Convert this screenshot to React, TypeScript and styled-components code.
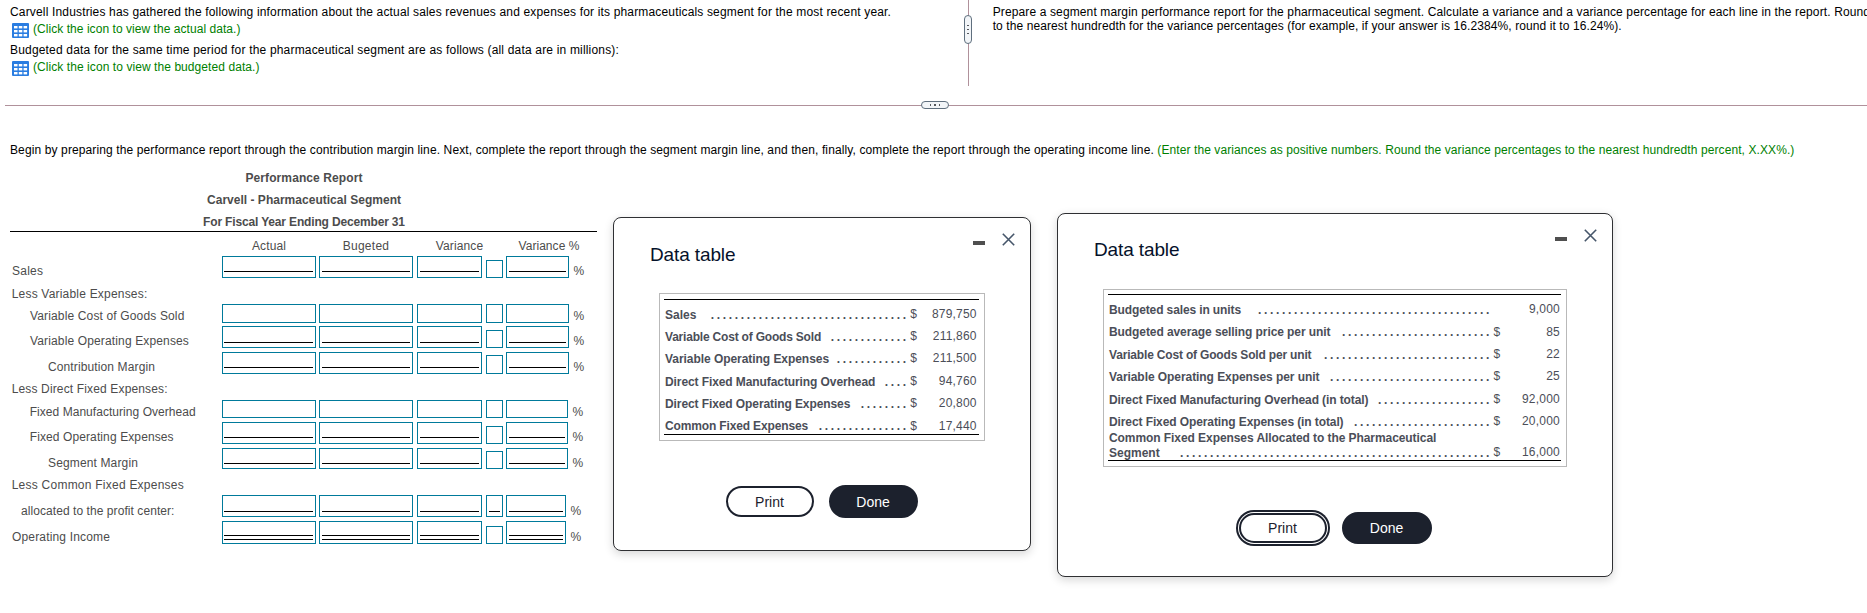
import React from 'react';
import styled, { createGlobalStyle } from 'styled-components';

const GlobalStyle = createGlobalStyle`
  * { box-sizing: border-box; }
  html, body { margin: 0; background: #fff; overflow: hidden; }
  body { font: 12px/14px "Liberation Sans", Arial, sans-serif; color: #000; }
`;

const Page = styled.main`
  width: 1867px;
  height: 613px;
  overflow: hidden;
  display: flex;
  flex-direction: column;
`;

const Text = styled.span<{ $ls?: number }>`
  letter-spacing: ${(p) => p.$ls ?? 0}px;
  white-space: pre;
`;

const GreenText = styled(Text)`
  color: #008000;
`;

/* ---------- top panes ---------- */

const Panes = styled.section`
  display: flex;
  height: 86px;
`;

const LeftPane = styled.div`
  width: 964px;
  padding: 5px 0 0 10px;
  display: flex;
  flex-direction: column;
`;

const RightPane = styled.div`
  flex: 1;
  min-width: 0;
  overflow: hidden;
  padding: 5px 0 0 20.7px;
  display: flex;
  flex-direction: column;
`;

const IconLine = styled.button`
  display: flex;
  align-items: flex-start;
  gap: 4px;
  height: 24px;
  padding: 3px 0 0 2px;
  border: 0;
  background: none;
  font: inherit;
  text-align: left;
  & > svg { margin-top: 1px; flex: none; }
`;

const VerticalSplit = styled.div`
  width: 8px;
  padding-top: 15px;
  background: linear-gradient(#b0919b, #b0919b) 4px 0 / 1px 100% no-repeat;
`;

const HorizontalSplit = styled.div`
  margin: 15px 0 0 5px;
  padding-left: 916px;
  height: 8px;
  background: linear-gradient(#b0919b, #b0919b) 0 4px / 100% 1px no-repeat;
`;

const Grip = styled.div<{ $vertical?: boolean }>`
  width: ${(p) => (p.$vertical ? 8 : 28)}px;
  height: ${(p) => (p.$vertical ? 29 : 8)}px;
  border: 1px solid #5f6f7e;
  border-radius: 4px;
  background: #f2f5f8;
  display: flex;
  flex-direction: ${(p) => (p.$vertical ? 'column' : 'row')};
  align-items: center;
  justify-content: center;
  gap: 3px;
`;

const GripDot = styled.i<{ $vertical?: boolean }>`
  width: ${(p) => (p.$vertical ? 2 : 1.5)}px;
  height: ${(p) => (p.$vertical ? 1 : 2)}px;
  background: #56595e;
`;

const Instruction = styled.p`
  margin: 34px 0 0;
  padding-left: 10px;
  height: 14px;
  white-space: nowrap;
`;

/* ---------- performance report ---------- */

const Workspace = styled.section`
  display: flex;
  align-items: flex-start;
`;

const Report = styled.div`
  width: 587px;
  margin: 14px 16px 0 10px;
  color: #4c4c4c;
`;

const ReportTitles = styled.header`
  display: flex;
  flex-direction: column;
  align-items: center;
  gap: 8px;
  padding: 0 0 2px 1px;
  border-bottom: 1px solid #000;
  font-weight: bold;
`;

const columns = '212px 97px 98px 69px 20px 91px';

const ColumnHeads = styled.div`
  display: grid;
  grid-template-columns: 212px 94px 100px 87px 92px;
  padding-top: 7px;
  height: 24px;
  text-align: center;
`;

const ReportRow = styled.div<{ $top: number; $h: number }>`
  display: grid;
  grid-template-columns: ${columns};
  align-items: end;
  margin-top: ${(p) => p.$top}px;
  height: ${(p) => p.$h}px;
`;

const RowLabel = styled(Text)<{ $indent: number; $drop?: number }>`
  padding-left: ${(p) => p.$indent}px;
  margin-bottom: ${(p) => -(p.$drop ?? 0)}px;
`;

const Field = styled.div<{ $w: number; $h: number; $rule?: number; $base: number; $left?: number }>`
  width: ${(p) => p.$w}px;
  height: ${(p) => p.$h}px;
  border: 1px solid #007a9b;
  display: flex;
  align-items: flex-end;
  padding: 0 2px ${(p) => p.$base}px ${(p) => p.$left ?? 2}px;
  &::after {
    content: '';
    flex: 1;
    border: solid #000;
    height: ${(p) => (p.$rule === 2 ? 3 : p.$rule ?? 0)}px;
    border-width: ${(p) => (p.$rule === 2 ? '1px 0' : p.$rule === 1 ? '1px 0 0' : '0')};
  }
`;

const PercentCell = styled.div<{ $drop?: number }>`
  display: flex;
  align-items: flex-end;
  gap: 4.5px;
  & > span { margin-bottom: ${(p) => -(p.$drop ?? 0)}px; }
`;

type RowData = {
  label: string; ls: number; indent: number; top: number; h: number;
  fields?: boolean; rule?: number; base?: number; small?: number; last?: number; drop?: number; smallRule?: boolean;
};

const reportRows: RowData[] = [
  { label: 'Sales', ls: 0.25, indent: 2, top: 0, h: 22, fields: true, rule: 1, base: 4, small: 18, last: 63 },
  { label: 'Less Variable Expenses:', ls: 0.2, indent: 1.7, top: 9, h: 14 },
  { label: 'Variable Cost of Goods Sold', ls: 0.147, indent: 20, top: 3, h: 19, fields: true, small: 19, last: 63 },
  { label: 'Variable Operating Expenses', ls: 0.141, indent: 20, top: 3, h: 22, fields: true, rule: 1, base: 3, small: 18, last: 63 },
  { label: 'Contribution Margin', ls: 0.12, indent: 38, top: 4, h: 22, fields: true, rule: 1, base: 4, small: 19, last: 63 },
  { label: 'Less Direct Fixed Expenses:', ls: 0.146, indent: 1.7, top: 8, h: 14 },
  { label: 'Fixed Manufacturing Overhead', ls: 0.045, indent: 19.7, top: 4, h: 18, fields: true, small: 18, last: 62, drop: 1 },
  { label: 'Fixed Operating Expenses', ls: 0.108, indent: 19.7, top: 4, h: 22, fields: true, rule: 1, base: 4, small: 18, last: 62 },
  { label: 'Segment Margin', ls: 0.14, indent: 38, top: 4, h: 21, fields: true, rule: 1, base: 3, small: 18, last: 62, drop: 1 },
  { label: 'Less Common Fixed Expenses', ls: 0.24, indent: 1.7, top: 9, h: 14 },
  { label: 'allocated to the profit center:', ls: 0.067, indent: 11, top: 3, h: 22, fields: true, rule: 1, base: 3, small: 22, last: 60, drop: 1, smallRule: true },
  { label: 'Operating Income', ls: 0.163, indent: 2, top: 4, h: 23, fields: true, rule: 2, base: 3, small: 18, last: 60 },
];

/* ---------- data table windows ---------- */

const Window = styled.div<{ $w: number; $h: number; $mt: number; $ml?: number }>`
  flex: none;
  width: ${(p) => p.$w}px;
  height: ${(p) => p.$h}px;
  margin: ${(p) => p.$mt}px 0 0 ${(p) => p.$ml ?? 0}px;
  border: 1px solid #2f3033;
  border-radius: 8px;
  background: #fff;
  box-shadow: 0 3px 10px rgba(0, 0, 0, 0.16);
  color: #4b4e58;
`;

const WindowHead = styled.header<{ $pad: number }>`
  display: flex;
  align-items: flex-start;
  height: 75px;
  padding: 0 15.5px 0 36px;
  & > h2 { padding-top: ${(p) => p.$pad}px; }
`;

const WindowTitle = styled.h2`
  flex: 1;
  margin: 0;
  font-size: 19px;
  line-height: 22px;
  font-weight: normal;
  letter-spacing: -0.12px;
  color: #05112a;
`;

const Minimize = styled.button`
  width: 12px;
  height: 4px;
  margin: 23px 16.5px 0 0;
  padding: 0;
  border: 0;
  background: #4f4f4f;
`;

const Close = styled.button`
  display: block;
  width: 13px;
  height: 13px;
  margin-top: 15px;
  padding: 0;
  border: 0;
  background: none;
  & > svg { display: block; }
`;

const TableFrame = styled.div<{ $w: number; $h: number; $top: number }>`
  width: ${(p) => p.$w}px;
  height: ${(p) => p.$h}px;
  margin-left: 45px;
  padding: ${(p) => p.$top}px 5px 0 4px;
  border: 1px solid #b9b9b9;
`;

const TableBody = styled.div<{ $end: number }>`
  border: solid #000;
  border-width: 1px 0;
  padding: 8px ${(p) => p.$end}px 1px 1px;
`;

const DataRow = styled.div<{ $h: number }>`
  display: flex;
  height: ${(p) => p.$h}px;
`;

const DataLabel = styled(Text)`
  flex: 1;
  font-weight: bold;
`;

const Leader = styled.span`
  margin-right: 1px;
  letter-spacing: 2.666px;
  font-weight: bold;
`;

const Currency = styled.span<{ $lift: number }>`
  width: 25px;
  padding-left: 0.6px;
  margin-top: ${(p) => -p.$lift}px;
`;

const Amount = styled.span<{ $lift: number }>`
  width: 42px;
  display: flex;
  justify-content: flex-end;
  margin-top: ${(p) => -p.$lift}px;
  letter-spacing: 0.2px;
`;

const Actions = styled.footer<{ $mt: number; $ml: number; $gap: number }>`
  display: flex;
  align-items: center;
  gap: ${(p) => p.$gap}px;
  margin: ${(p) => p.$mt}px 0 0 ${(p) => p.$ml}px;
`;

const Pill = styled.button<{ $w: number; $h: number; $solid?: boolean; $focus?: boolean }>`
  width: ${(p) => p.$w}px;
  height: ${(p) => p.$h}px;
  padding: 0 1px 0 0;
  border: 2px solid #1c212d;
  border-radius: 17px;
  background: ${(p) => (p.$solid ? '#1c212d' : '#fff')};
  color: ${(p) => (p.$solid ? '#fff' : '#1c212d')};
  font: 14px/16px "Liberation Sans", Arial, sans-serif;
  box-shadow: ${(p) => (p.$focus ? '0 0 0 1px #fff, 0 0 0 3px #1c212d' : 'none')};
`;

type Entry = { label: string; ls: number; dots: number; cur?: string; value?: string; h: number; lift?: number };

const actual: Entry[] = [
  { label: 'Sales', ls: 0, dots: 33, cur: '$', value: '879,750', h: 22, lift: 1 },
  { label: 'Variable Cost of Goods Sold', ls: -0.198, dots: 13, cur: '$', value: '211,860', h: 22, lift: 1 },
  { label: 'Variable Operating Expenses', ls: -0.052, dots: 12, cur: '$', value: '211,500', h: 23, lift: 1 },
  { label: 'Direct Fixed Manufacturing Overhead', ls: -0.09, dots: 4, cur: '$', value: '94,760', h: 22, lift: 1 },
  { label: 'Direct Fixed Operating Expenses', ls: -0.09, dots: 8, cur: '$', value: '20,800', h: 22, lift: 1 },
  { label: 'Common Fixed Expenses', ls: -0.145, dots: 15, cur: '$', value: '17,440', h: 14 },
];

const budgeted: Entry[] = [
  { label: 'Budgeted sales in units', ls: -0.12, dots: 39, value: '9,000', h: 22, lift: 1 },
  { label: 'Budgeted average selling price per unit', ls: -0.085, dots: 25, cur: '$', value: '85', h: 23 },
  { label: 'Variable Cost of Goods Sold per unit', ls: -0.175, dots: 28, cur: '$', value: '22', h: 22, lift: 1 },
  { label: 'Variable Operating Expenses per unit', ls: -0.065, dots: 27, cur: '$', value: '25', h: 23, lift: 1 },
  { label: 'Direct Fixed Manufacturing Overhead (in total)', ls: -0.1, dots: 19, cur: '$', value: '92,000', h: 22, lift: 1 },
  { label: 'Direct Fixed Operating Expenses (in total)', ls: -0.1, dots: 23, cur: '$', value: '20,000', h: 16, lift: 1 },
  { label: 'Common Fixed Expenses Allocated to the Pharmaceutical', ls: -0.07, dots: 0, h: 15 },
  { label: 'Segment', ls: 0, dots: 52, cur: '$', value: '16,000', h: 13, lift: 1 },
];

function TableIcon() {
  return (
    <svg width="17" height="15" viewBox="0 0 17 15">
      <rect width="17" height="15" rx="1" fill="#2a7de1" />
      <g fill="#fff">
        {[3, 7, 11].map((y) => [2, 6.8, 11.6].map((x) => <rect key={`${x}-${y}`} x={x} y={y} width={3.5} height={2.4} />))}
      </g>
    </svg>
  );
}

function SplitGrip({ vertical }: { vertical?: boolean }) {
  return (
    <Grip $vertical={vertical}>
      <GripDot $vertical={vertical} />
      <GripDot $vertical={vertical} />
      <GripDot $vertical={vertical} />
    </Grip>
  );
}

function ReportLine({ row }: { row: RowData }) {
  const { h, rule, base = 0 } = row;
  return (
    <ReportRow $top={row.top} $h={h}>
      <RowLabel $ls={row.ls} $indent={row.indent} $drop={row.drop}>{row.label}</RowLabel>
      {row.fields && (
        <>
          <Field $w={94} $h={h} $rule={rule} $base={base} $left={1} />
          <Field $w={94} $h={h} $rule={rule} $base={base} />
          <Field $w={65} $h={h} $rule={rule} $base={base} />
          <Field $w={17} $h={row.small!} $rule={row.smallRule ? 1 : 0} $base={base} />
          <PercentCell $drop={row.drop}>
            <Field $w={row.last!} $h={h} $rule={rule} $base={base} />
            <span>%</span>
          </PercentCell>
        </>
      )}
    </ReportRow>
  );
}

function DataRows({ entries, end }: { entries: Entry[]; end: number }) {
  return (
    <TableBody $end={end}>
      {entries.map((e) => (
        <DataRow key={e.label} $h={e.h}>
          <DataLabel $ls={e.ls}>{e.label}</DataLabel>
          {e.dots > 0 && <Leader>{'.'.repeat(e.dots)}</Leader>}
          <Currency $lift={e.lift ?? 0}>{e.cur}</Currency>
          <Amount $lift={e.lift ?? 0}>{e.value}</Amount>
        </DataRow>
      ))}
    </TableBody>
  );
}

function Head({ pad }: { pad: number }) {
  return (
    <WindowHead $pad={pad}>
      <WindowTitle>Data table</WindowTitle>
      <Minimize aria-label="Minimize" />
      <Close aria-label="Close">
        <svg width="13" height="13" viewBox="0 0 13 13">
          <path d="M0.8 0.8 12.2 12.2 M12.2 0.8 0.8 12.2" stroke="#46566a" strokeWidth="1.6" fill="none" />
        </svg>
      </Close>
    </WindowHead>
  );
}

export default function App() {
  return (
    <Page>
      <GlobalStyle />
      <Panes>
        <LeftPane>
          <Text $ls={0.162}>Carvell Industries has gathered the following information about the actual sales revenues and expenses for its pharmaceuticals segment for the most recent year.</Text>
          <IconLine>
            <TableIcon />
            <GreenText $ls={0.05}>(Click the icon to view the actual data.)</GreenText>
          </IconLine>
          <Text $ls={0.179}>Budgeted data for the same time period for the pharmaceutical segment are as follows (all data are in millions):</Text>
          <IconLine>
            <TableIcon />
            <GreenText $ls={0.071}>(Click the icon to view the budgeted data.)</GreenText>
          </IconLine>
        </LeftPane>
        <VerticalSplit><SplitGrip vertical /></VerticalSplit>
        <RightPane>
          <Text $ls={0.125}>Prepare a segment margin performance report for the pharmaceutical segment. Calculate a variance and a variance percentage for each line in the report. Round</Text>
          <Text $ls={0.092}>to the nearest hundredth for the variance percentages (for example, if your answer is 16.2384%, round it to 16.24%).</Text>
        </RightPane>
      </Panes>
      <HorizontalSplit><SplitGrip /></HorizontalSplit>
      <Instruction>
        <Text $ls={0.117}>Begin by preparing the performance report through the contribution margin line. Next, complete the report through the segment margin line, and then, finally, complete the report through the operating income line. </Text>
        <GreenText $ls={0.088}>(Enter the variances as positive numbers. Round the variance percentages to the nearest hundredth percent, X.XX%.)</GreenText>
      </Instruction>
      <Workspace>
        <Report>
          <ReportTitles>
            <Text $ls={0.091}>Performance Report</Text>
            <Text $ls={0.018}>Carvell - Pharmaceutical Segment</Text>
            <Text $ls={-0.159}>For Fiscal Year Ending December 31</Text>
          </ReportTitles>
          <ColumnHeads>
            <span />
            <Text $ls={0.1}>Actual</Text>
            <Text $ls={0.25}>Bugeted</Text>
            <Text $ls={0.129}>Variance</Text>
            <Text $ls={0.053}>Variance %</Text>
          </ColumnHeads>
          {reportRows.map((row) => <ReportLine key={row.label} row={row} />)}
        </Report>
        <Window $w={418} $h={334} $mt={60}>
          <Head pad={26} />
          <TableFrame $w={326} $h={148} $top={5}><DataRows entries={actual} end={2.3} /></TableFrame>
          <Actions $mt={44} $ml={112} $gap={15}>
            <Pill $w={88} $h={31}>Print</Pill>
            <Pill $w={89} $h={33} $solid>Done</Pill>
          </Actions>
        </Window>
        <Window $w={556} $h={364} $mt={56} $ml={26}>
          <Head pad={25} />
          <TableFrame $w={464} $h={178} $top={4}><DataRows entries={budgeted} end={1.1} /></TableFrame>
          <Actions $mt={45} $ml={181} $gap={15}>
            <Pill $w={88} $h={30} $focus>Print</Pill>
            <Pill $w={90} $h={32} $solid>Done</Pill>
          </Actions>
        </Window>
      </Workspace>
    </Page>
  );
}
